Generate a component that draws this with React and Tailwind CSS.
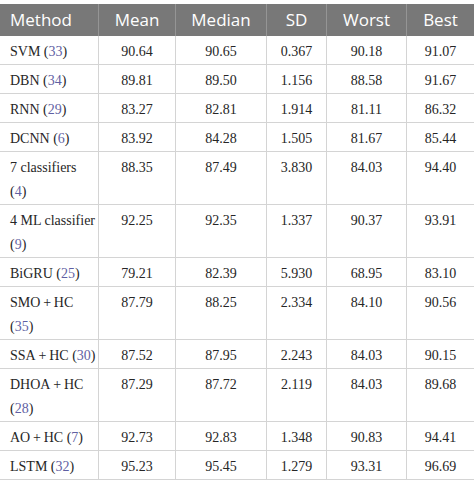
const cols = ['Method', 'Mean', 'Median', 'SD', 'Worst', 'Best'];

const rows = [
  { name: ['SVM'], ref: '33', v: ['90.64', '90.65', '0.367', '90.18', '91.07'] },
  { name: ['DBN'], ref: '34', v: ['89.81', '89.50', '1.156', '88.58', '91.67'] },
  { name: ['RNN'], ref: '29', v: ['83.27', '82.81', '1.914', '81.11', '86.32'] },
  { name: ['DCNN'], ref: '6', v: ['83.92', '84.28', '1.505', '81.67', '85.44'] },
  { name: ['7 classifiers', ''], ref: '4', v: ['88.35', '87.49', '3.830', '84.03', '94.40'] },
  { name: ['4 ML classifier', ''], ref: '9', v: ['92.25', '92.35', '1.337', '90.37', '93.91'] },
  { name: ['BiGRU'], ref: '25', v: ['79.21', '82.39', '5.930', '68.95', '83.10'] },
  { name: ['SMO\u2009+\u2009HC', ''], ref: '35', v: ['87.79', '88.25', '2.334', '84.10', '90.56'] },
  { name: ['SSA\u2009+\u2009HC'], ref: '30', v: ['87.52', '87.95', '2.243', '84.03', '90.15'] },
  { name: ['DHOA\u2009+\u2009HC', ''], ref: '28', v: ['87.29', '87.72', '2.119', '84.03', '89.68'] },
  { name: ['AO\u2009+\u2009HC'], ref: '7', v: ['92.73', '92.83', '1.348', '90.83', '94.41'] },
  { name: ['LSTM'], ref: '32', v: ['95.23', '95.45', '1.279', '93.31', '96.69'] },
];

const grid = 'grid grid-cols-[99px_77px_91px_60px_80px_67px]';

function Method({ name, refNo }) {
  // two-part names wrap: first line text, second line the citation
  if (name.length === 2) {
    return (
      <>
        <div>{name[0]}</div>
        <div>
          (<span className="text-[#5f5fa3]">{refNo}</span>)
        </div>
      </>
    );
  }
  return (
    <div>
      {name[0]} (<span className="text-[#5f5fa3]">{refNo}</span>)
    </div>
  );
}

export default function App() {
  return (
    <div className="w-[474px] h-[486px] bg-white pt-[4px]">
      <div className={`${grid} bg-[#787878] h-[32px] text-white text-[17px] leading-[32px] font-['Open_Sans',sans-serif]`}>
        {cols.map((c, i) => (
          <div
            key={c}
            className={`${i === 0 ? 'pl-[10px] text-left' : 'text-center'} ${i < 5 ? 'border-r border-[#959595]' : ''}`}
          >
            {c}
          </div>
        ))}
      </div>
      <div className="font-['Liberation_Serif',serif] text-[14px] leading-[24px] text-[#262626]">
        {rows.map((r) => (
          <div key={r.name[0]} className={`${grid} border-b border-[#d4d4d4]`}>
            <div className="pl-[10px] pt-[4px] border-r border-[#d4d4d4] whitespace-nowrap">
              <Method name={r.name} refNo={r.ref} />
            </div>
            {r.v.map((x, i) => (
              <div
                key={i}
                className={`pt-[4px] text-center ${i < 4 ? 'border-r border-[#d4d4d4]' : ''}`}
              >
                {x}
              </div>
            ))}
          </div>
        ))}
      </div>
    </div>
  );
}
